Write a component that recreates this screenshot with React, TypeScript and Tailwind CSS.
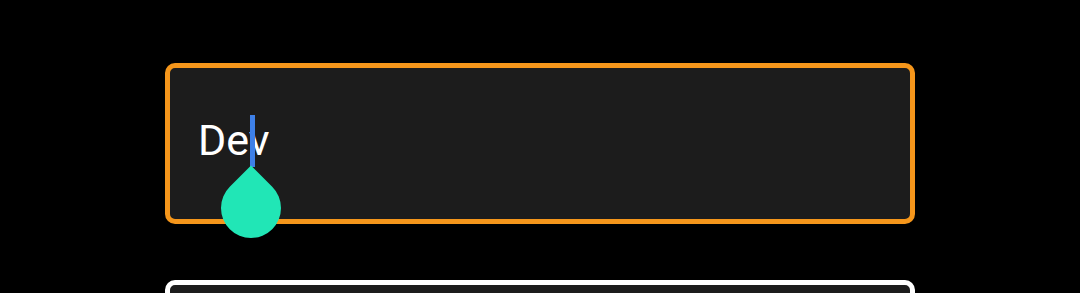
import React from "react";

export default function App() {
  return (
    <div className="w-[1080px] h-[293px] overflow-hidden bg-black" style={{ fontFamily: "Roboto, 'Noto Sans', sans-serif" }}>
      <div className="flex flex-col gap-[56px] pt-[63px] pl-[165px]">
        <div className="relative w-[750px] h-[161px] rounded-[10px] border-[5px] border-[#f5961b] bg-[#1c1c1c]">
          <div className="flex h-full items-center pl-[28px] pb-[6px]">
            <span className="text-[43px] leading-none text-white">Dev</span>
          </div>
          <div className="absolute left-[80px] top-[47px] w-[5px] h-[52px] bg-[#3e80e8]" />
          <div className="absolute left-[51px] top-[110px] w-[60px] h-[60px] rotate-45 rounded-full rounded-tl-none bg-[#21e6b6]" />
        </div>
        <div className="w-[750px] h-[161px] rounded-[10px] border-[5px] border-white bg-[#1c1c1c]" />
      </div>
    </div>
  );
}
